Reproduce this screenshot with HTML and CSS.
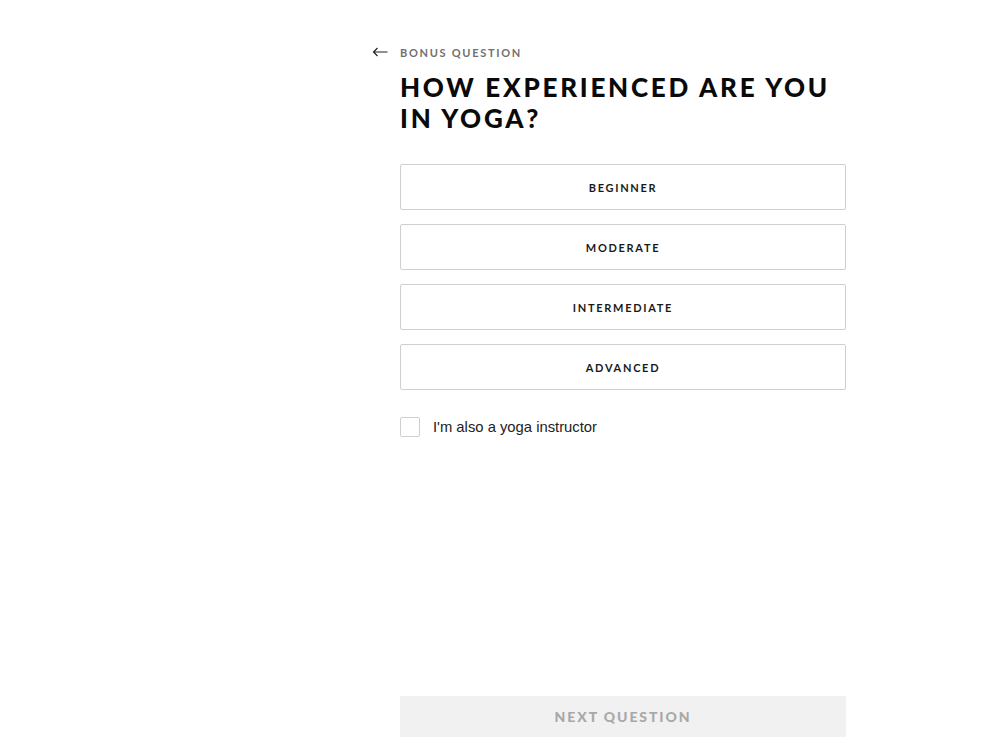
FILE: index.html
```html
<!DOCTYPE html>
<html>
<head>
<meta charset="utf-8">
<link rel="stylesheet" href="styles.css">
</head>
<body>
<div class="page">
  <div class="column">
    <div class="crumb">
      <svg class="back" width="16" height="10" viewBox="0 0 16 10"><path d="M15.5 5H1.5M5.5 1L1.5 5L5.5 9" fill="none" stroke="#222" stroke-width="1.2"/></svg>
      <span>BONUS QUESTION</span>
    </div>
    <h1 class="title">HOW EXPERIENCED ARE YOU IN YOGA?</h1>
    <div class="options">
      <button class="option">BEGINNER</button>
      <button class="option">MODERATE</button>
      <button class="option">INTERMEDIATE</button>
      <button class="option">ADVANCED</button>
    </div>
    <label class="check">
      <span class="box"></span>
      <span class="check-label">I'm also a yoga instructor</span>
    </label>
    <button class="next">NEXT QUESTION</button>
  </div>
</div>
</body>
</html>
```
FILE: styles.css
```css
html, body { margin: 0; padding: 0; background: #fff; }
body { font-family: "Lato", "Liberation Sans", sans-serif; color: #111; }
.page { height: 750px; display: flex; }
.column {
  margin-left: 400px;
  width: 446px;
  display: flex;
  flex-direction: column;
  padding-top: 44px;
  padding-bottom: 13px;
  box-sizing: border-box;
}
.crumb {
  display: flex;
  align-items: center;
  height: 16px;
  position: relative;
  font-size: 11px;
  letter-spacing: 1.7px;
  color: #707070;
  font-weight: 700;
}
.back { position: absolute; left: -28px; top: 3px; }
.title {
  margin: 12px 0 0 0;
  font-size: 26px;
  line-height: 31px;
  font-weight: 900;
  letter-spacing: 2.75px;
  color: #0a0a0a;
  width: 440px;
}
.options { display: flex; flex-direction: column; gap: 14px; margin-top: 30px; }
.option {
  height: 46px;
  border: 1px solid #cfcfcf;
  border-radius: 2px;
  background: #fff;
  font-family: "Lato", sans-serif;
  font-size: 11px;
  font-weight: 700;
  letter-spacing: 1.7px;
  color: #1a1a1a;
  padding: 0;
}
.check { display: flex; align-items: center; margin-top: 27px; gap: 13px; }
.box {
  width: 18px; height: 18px;
  border: 1px solid #cfcfcf;
  border-radius: 2px;
}
.check-label { font-family: "Liberation Sans", sans-serif; font-size: 14.8px; color: #222; }
.next {
  margin-top: auto;
  height: 41px;
  background: #f1f1f1;
  border: none;
  font-family: "Lato", sans-serif;
  font-weight: 900;
  font-size: 14px;
  letter-spacing: 1.9px;
  color: #a8a8a8;
  padding: 0;
}
```
